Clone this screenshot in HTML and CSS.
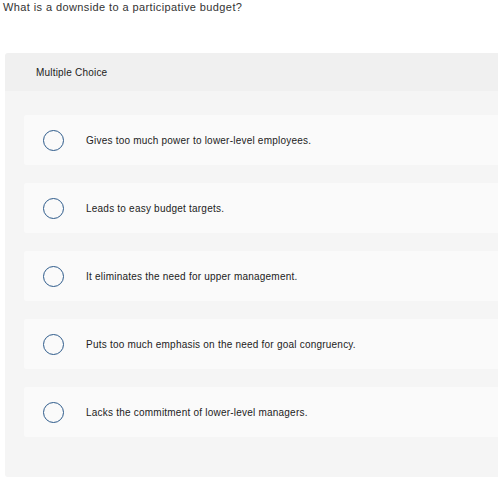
FILE: index.html
```html
<!DOCTYPE html>
<html>
<head>
<meta charset="utf-8">
<link rel="stylesheet" href="styles.css">
</head>
<body>
<p class="question">What is a downside to a participative budget?</p>
<section class="panel">
  <header class="panel-head">Multiple Choice</header>
  <div class="panel-body">
    <label class="option"><span class="radio"></span><span class="opt-text">Gives too much power to lower-level employees.</span></label>
    <label class="option"><span class="radio"></span><span class="opt-text">Leads to easy budget targets.</span></label>
    <label class="option"><span class="radio"></span><span class="opt-text">It eliminates the need for upper management.</span></label>
    <label class="option"><span class="radio"></span><span class="opt-text">Puts too much emphasis on the need for goal congruency.</span></label>
    <label class="option"><span class="radio"></span><span class="opt-text">Lacks the commitment of lower-level managers.</span></label>
  </div>
</section>
</body>
</html>
```
FILE: styles.css
```css
html, body {
  margin: 0;
  padding: 0;
  background: #ffffff;
}
body {
  font-family: "Liberation Sans", Arial, sans-serif;
  color: #222222;
}
.question {
  margin: 0;
  padding: 1px 0 0 3px;
  font-size: 11px;
  line-height: 13px;
  letter-spacing: 0.4px;
  color: #333333;
}
.panel {
  margin: 39px 0 0 5px;
  border-radius: 3px 0 0 3px;
  overflow: hidden;
}
.panel-head {
  background: #f0f0f0;
  height: 38px;
  padding-left: 31px;
  display: flex;
  align-items: center;
  font-size: 10px;
  letter-spacing: 0.2px;
}
.panel-body {
  background: #f5f5f5;
  padding: 24px 0 40px 19px;
  display: flex;
  flex-direction: column;
  gap: 18px;
}
.option {
  background: #fafafa;
  height: 50px;
  border-radius: 2px 0 0 2px;
  display: flex;
  align-items: center;
  padding-left: 19px;
}
.radio {
  width: 19px;
  height: 19px;
  border: 1.5px solid #2d5a8a;
  border-radius: 50%;
  flex: none;
  box-sizing: content-box;
}
.opt-text {
  margin-left: 22px;
  font-size: 10px;
  letter-spacing: 0.22px;
  color: #222222;
}
```
